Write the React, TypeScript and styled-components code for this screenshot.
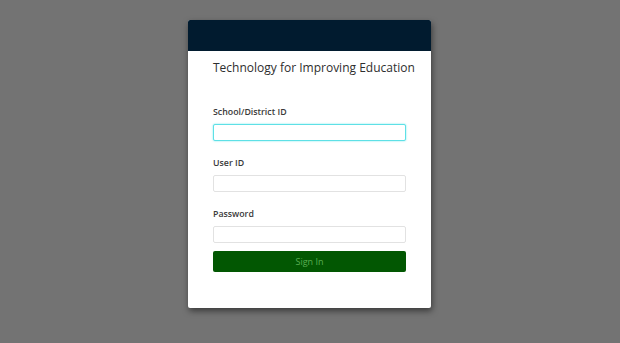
import React from "react";
import styled, { createGlobalStyle } from "styled-components";

const Global = createGlobalStyle`
  html, body {
    margin: 0;
    padding: 0;
    background: #737373;
    font-family: "Open Sans", "Liberation Sans", sans-serif;
  }
`;

const Page = styled.div`
  width: 620px;
  height: 343px;
  display: flex;
  justify-content: center;
  align-items: flex-start;
  padding-top: 20px;
  box-sizing: border-box;
`;

const Card = styled.div`
  width: 243px;
  height: 288px;
  background: #fff;
  border-radius: 2px;
  overflow: hidden;
  box-shadow: 1px 3px 6px rgba(0, 0, 0, 0.5);
  margin-right: 1px;
`;

const Header = styled.div`
  height: 31px;
  background: #011b2f;
`;

const Body = styled.div`
  padding: 8px 25px 0 25px;
  display: flex;
  flex-direction: column;
`;

const Title = styled.h1`
  margin: 0 0 29px 0;
  font-size: 12px;
  font-weight: 400;
  color: #2e2e2e;
  line-height: 18px;
  white-space: nowrap;
`;

const Label = styled.label`
  font-size: 8.8px;
  font-weight: 600;
  color: #3a3a3a;
  line-height: 13px;
  margin-bottom: 5px;
`;

const Input = styled.input<{ $focused?: boolean }>`
  width: 193px;
  height: 17px;
  box-sizing: border-box;
  border: 1px solid ${(p) => (p.$focused ? "#5ee0e6" : "#e2e2e2")};
  box-shadow: ${(p) => (p.$focused ? "0 0 2px #6ee6ea" : "none")};
  border-radius: 2px;
  outline: none;
  margin-bottom: 16px;
  background: #fff;
`;

const Button = styled.button`
  width: 193px;
  height: 21px;
  margin-top: -8px;
  border: none;
  border-radius: 2px;
  background: #025702;
  color: #5aae52;
  font-family: "Open Sans", "Liberation Sans", sans-serif;
  font-size: 9px;
  padding: 0;
`;

export default function App() {
  return (
    <Page>
      <Global />
      <Card>
        <Header />
        <Body>
          <Title>Technology for Improving Education</Title>
          <Label>School/District ID</Label>
          <Input $focused />
          <Label>User ID</Label>
          <Input />
          <Label>Password</Label>
          <Input type="password" />
          <Button>Sign In</Button>
        </Body>
      </Card>
    </Page>
  );
}
